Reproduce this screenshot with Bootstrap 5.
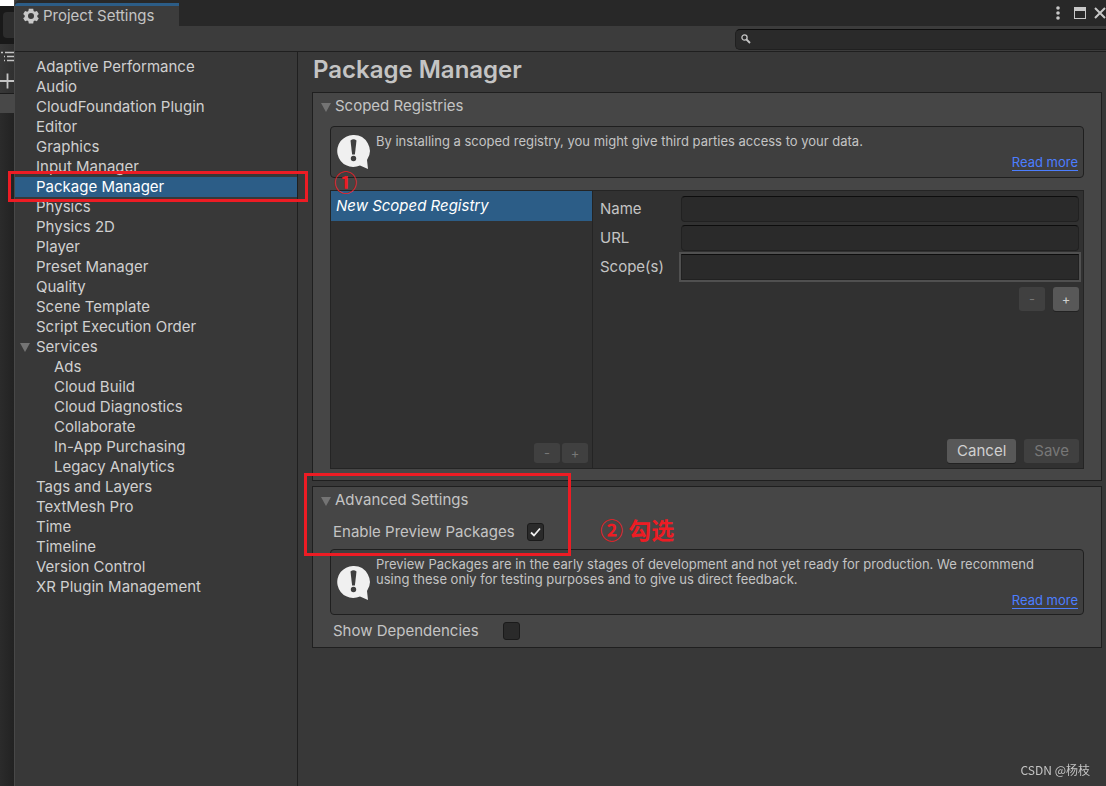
<!DOCTYPE html>
<html lang="en" data-bs-theme="dark">
<head>
<meta charset="utf-8">
<meta name="viewport" content="width=device-width, initial-scale=1">
<title>Project Settings</title>
<link rel="stylesheet" href="https://cdn.jsdelivr.net/npm/bootstrap@5.3.0/dist/css/bootstrap.min.css">
<style>
  :root { --line: #1f1f1f; --field: #2a2a2a; --pick: #2c5d87; --ink: #c4c4c4; --red: #ed1c24; }
  body { font: 15px/20px Inter, "Noto Sans CJK SC", sans-serif; color: var(--ink); background: #383838; }
  svg { display: block; flex: none; }
  a { color: inherit; text-decoration: none; }

  /* editor window showing behind the settings window */
  .behind { width: 14px; background: linear-gradient(90deg, #2b2b2b, #222); overflow: hidden; flex: none; }
  .behind-sky { height: 6px; background: #fff; }
  .behind-bar { height: 38px; background: #191919; padding: 6px 0 0 3px; }
  .behind-btn { height: 26px; width: 24px; background: #2d2d2d; border-radius: 4px; }
  .behind-tools { height: 50px; background: linear-gradient(90deg, #383838, #303030); border-bottom: 1px solid #1c1c1c; }
  .behind-row { height: 19px; background: #484848; }

  .pane { border-left: 1px solid #484848; min-width: 0; }
  .titlebar { height: 26px; background: #282828; border-top-left-radius: 5px; }
  .tab { width: 164px; margin-top: 3px; height: 23px; background: #3c3c3c; border-top: 3px solid var(--pick); border-top-left-radius: 3px; padding: 0 0 1px 8px; gap: 4px; }
  .toolbar { height: 26px; background: #3c3c3c; border-bottom: 1px solid var(--line); padding-top: 1px; }
  .finder { flex: 0 0 34%; height: 21px; background: var(--field); border: 1px solid #202020; border-top-color: #0d0d0d; border-right: 0; border-radius: 5px 0 0 5px; padding-left: 5px; gap: 4px; }
  .finder input { background: none; border: 0; outline: 0; color: var(--ink); min-width: 0; }
  .win-btn { border: 0; background: none; padding: 0; color: #c8c8c8; }

  .side { width: 283px; flex: none; border-right: 1px solid var(--line); padding-top: 5px; }
  .side a { display: block; height: 20px; padding-left: 21px; color: #d0d0d0; position: relative; }
  .side a.sub { padding-left: 39px; }
  .side a.active { background: var(--pick); color: #fff; }
  .fold { position: absolute; left: 5px; top: 6px; }

  .content { padding: 3px 4px 24px 14px; min-width: 0; }
  h1 { font-size: 24px; line-height: 30px; font-weight: 600; margin: 0 0 7px 1px; color: var(--ink); }
  .panel { background: #464646; border: 1px solid var(--line); padding: 0 17px; }
  .panel + .panel { margin-top: 5px; }
  .panel h2 { font-size: 15px; line-height: 25px; font-weight: 400; margin: 0 0 8px -9px; gap: 4px; color: var(--ink); }
  .note { background: #3f3f3f; border: 1px solid var(--line); border-radius: 4px; font-size: 13px; line-height: 15px; padding: 7px 5px 6px 6px; gap: 5px; min-height: 52px; }
  .note.tall { min-height: 66px; margin-top: 5px; padding-bottom: 5px; }
  .note p { margin: 0 8px 0 0; }
  .more { color: #4c7eff; border-bottom: 1px solid #4c7eff; align-self: flex-end; }
  .registry { border: 1px solid #242424; background: #313131; height: 279px; margin: 12px 0 11px; }
  .reg-list { width: 262px; flex: none; border-right: 1px solid #242424; }
  .reg-item { background: var(--pick); color: #fff; font-style: italic; height: 30px; line-height: 30px; padding: 0 0 0 5px; border: 0; text-align: left; }
  .reg-list .steps { gap: 2px; padding: 5px 4px; }
  .reg-form { padding: 5px 4px; padding-left: 7px; min-width: 0; }
  .field-row { gap: 3px; height: 26px; margin-bottom: 3px; }
  .field-row label { width: 78px; flex: none; }
  .field { height: 26px; min-width: 0; background: var(--field); color: var(--ink); border: 1px solid #212121; border-top-color: #0d0d0d; border-radius: 4px; outline: 0; }
  .field.ring { border-radius: 0; outline: 2px solid #505050; }
  .key { border: 0; border-radius: 3px; background: #585858; color: #d0d0d0; height: 24px; padding: 0; line-height: 24px; box-shadow: 0 1px 0 #222; }
  .key:disabled { background: #404040; color: #777; box-shadow: none; }
  .key.step { width: 26px; font-size: 13px; }
  .key.wide { padding: 0 10px; }
  .reg-list .key { height: 20px; line-height: 20px; }
  .opt { height: 24px; gap: 12px; padding-left: 3px; }
  .opt label { min-width: 158px; }
  .tick { appearance: none; width: 17px; height: 18px; margin: 0; background: var(--field); border: 1px solid #1a1a1a; border-radius: 3px; }
  .tick:checked { background: var(--field) url("data:image/svg+xml,%3Csvg xmlns='http://www.w3.org/2000/svg' viewBox='0 0 15 16'%3E%3Cpath d='M3 8.5l3 3 6-7' fill='none' stroke='%23eee' stroke-width='1.8'/%3E%3C/svg%3E") center/contain no-repeat; }

  .frame { position: absolute; border: 3px solid var(--red); pointer-events: none; z-index: 3; }
  .frame-nav { inset: -6px -11px -5px -7px; }
  .frame-opt { left: -9px; top: -14px; width: 267px; height: 83px; }
  .remark { position: absolute; color: var(--red); font: 700 23px/24px "Noto Sans CJK SC", sans-serif; z-index: 3; white-space: nowrap; }
  .remark-one { left: 3px; top: 42px; }
  .remark-two { left: 287px; top: 30px; }
  .credit { position: fixed; right: 16px; bottom: 6px; font: 12px/20px "Noto Sans CJK SC", sans-serif; color: #c4c4c4; }
</style>
</head>
<body>
<div class="d-flex min-vh-100">
  <div class="behind">
    <div class="behind-sky"></div>
    <div class="behind-bar"><div class="behind-btn"></div></div>
    <div class="behind-tools">
      <svg width="15" height="50" viewBox="0 0 15 50" fill="none" stroke="#c4c4c4"><path d="M5 8.500h10M7 12.500h8M7 16.500h8M1 8.500h2M4 12.500h1M4 16.500h1" stroke-width="1.300"/><path d="M0 37h15M7.500 29.500v15" stroke-width="1.800"/></svg>
    </div>
    <div class="behind-row"></div>
  </div>

  <div class="pane flex-grow-1 d-flex flex-column">
    <header>
      <div class="titlebar d-flex justify-content-between">
        <div class="tab d-flex align-items-center">
          <svg width="16" height="16" viewBox="0 0 16 16"><path fill="#c8c8c8" fill-rule="evenodd" d="M5.800.8h4.400l.4 2.200 1.200.7 2.100-.8 1.900 3.200L14.300 7.500v1.400l1.500 1.300-1.900 3-2.100-.7-1.200.7-.4 2.200H5.800L5.400 13.200l-1.200-.7-2.100.7-1.900-3L1.700 8.900V7.500L.2 6.100l1.900-3.200 2.100.8L5.400 3zM8 5a3 3 0 1 0 0 6a3 3 0 0 0 0-6z"/></svg>
          <span>Project Settings</span>
        </div>
        <div class="d-flex align-items-center gap-2">
          <button class="win-btn" aria-label="Menu"><svg width="8" height="14" viewBox="0 0 8 14" fill="currentColor"><circle cx="4" cy="2" r="1.800"/><circle cx="4" cy="7" r="1.800"/><circle cx="4" cy="12" r="1.800"/></svg></button>
          <button class="win-btn ms-1" aria-label="Maximize"><svg width="12" height="12" viewBox="0 0 12 12"><path fill="currentColor" fill-rule="evenodd" d="M0 0h12v12H0zM1 4v7h10V4z"/></svg></button>
          <button class="win-btn" aria-label="Close"><svg width="12" height="12" viewBox="0 0 12 12"><path d="M1 1l10 10M11 1L1 11" stroke="currentColor" stroke-width="2"/></svg></button>
        </div>
      </div>
      <div class="toolbar d-flex justify-content-end align-items-center">
        <div class="finder d-flex align-items-center">
          <svg width="10" height="10" viewBox="0 0 10 10" fill="none" stroke="#c4c4c4"><circle cx="3.500" cy="3.500" r="2.600" stroke-width="1.300"/><path d="M5.500 5.500L9 9" stroke-width="1.800"/></svg>
          <input type="search" class="flex-grow-1" aria-label="Search settings">
        </div>
      </div>
    </header>

    <div class="d-flex flex-grow-1">
      <nav class="side" aria-label="Settings">
        <a href="#">Adaptive Performance</a>
        <a href="#">Audio</a>
        <a href="#">CloudFoundation Plugin</a>
        <a href="#">Editor</a>
        <a href="#">Graphics</a>
        <a href="#">Input Manager</a>
        <a href="#" class="active">Package Manager<span class="frame frame-nav"></span></a>
        <a href="#">Physics</a>
        <a href="#">Physics 2D</a>
        <a href="#">Player</a>
        <a href="#">Preset Manager</a>
        <a href="#">Quality</a>
        <a href="#">Scene Template</a>
        <a href="#">Script Execution Order</a>
        <a href="#"><svg class="fold" width="10" height="9" viewBox="0 0 10 9"><path d="M0 0h10L5 9z" fill="#747474"/></svg>Services</a>
        <a href="#" class="sub">Ads</a>
        <a href="#" class="sub">Cloud Build</a>
        <a href="#" class="sub">Cloud Diagnostics</a>
        <a href="#" class="sub">Collaborate</a>
        <a href="#" class="sub">In-App Purchasing</a>
        <a href="#" class="sub">Legacy Analytics</a>
        <a href="#">Tags and Layers</a>
        <a href="#">TextMesh Pro</a>
        <a href="#">Time</a>
        <a href="#">Timeline</a>
        <a href="#">Version Control</a>
        <a href="#">XR Plugin Management</a>
      </nav>

      <main class="content flex-grow-1">
        <h1>Package Manager</h1>

        <section class="panel">
          <h2 class="d-flex align-items-center"><svg class="mt-1" width="10" height="9" viewBox="0 0 10 9"><path d="M0 0h10L5 9z" fill="#747474"/></svg>Scoped Registries</h2>
          <div class="note d-flex position-relative">
            <svg width="34" height="36" viewBox="0 0 34 36"><path d="M16 1a16 16 0 1 0 7 30.500L31 35l-1-9A16 16 0 0 0 16 1z" fill="#f0f0f0"/><path d="M13.500 6.500q3-2.500 6 0L17.900 20.500h-2.800z" fill="#3f3f3f"/><circle cx="16.500" cy="24.500" r="2.700" fill="#3f3f3f"/></svg>
            <div class="flex-grow-1 d-flex flex-column justify-content-between">
              <p>By installing a scoped registry, you might give third parties access to your data.</p>
              <a href="#" class="more">Read more</a>
            </div>
            <span class="remark remark-one">①</span>
          </div>

          <div class="registry d-flex">
            <div class="reg-list d-flex flex-column justify-content-between">
              <button class="reg-item">New Scoped Registry</button>
              <div class="steps d-flex justify-content-end">
                <button class="key step" disabled>-</button>
                <button class="key step" disabled>+</button>
              </div>
            </div>
            <form class="reg-form flex-grow-1 d-flex flex-column">
              <div class="field-row d-flex align-items-center"><label for="reg-name">Name</label><input id="reg-name" class="field flex-grow-1" type="text"></div>
              <div class="field-row d-flex align-items-center"><label for="reg-url">URL</label><input id="reg-url" class="field flex-grow-1" type="text"></div>
              <div class="field-row d-flex align-items-center"><label for="reg-scope">Scope(s)</label><input id="reg-scope" class="field ring flex-grow-1" type="text"></div>
              <div class="d-flex justify-content-end gap-2 pt-1">
                <button type="button" class="key step" disabled>-</button>
                <button type="button" class="key step">+</button>
              </div>
              <div class="d-flex justify-content-end gap-2 mt-auto">
                <button type="button" class="key wide">Cancel</button>
                <button type="button" class="key wide" disabled>Save</button>
              </div>
            </form>
          </div>
        </section>

        <section class="panel position-relative">
          <h2 class="d-flex align-items-center"><svg class="mt-1" width="10" height="9" viewBox="0 0 10 9"><path d="M0 0h10L5 9z" fill="#747474"/></svg>Advanced Settings</h2>
          <div class="opt d-flex align-items-center">
            <label for="preview">Enable Preview Packages</label>
            <input id="preview" class="tick" type="checkbox" checked>
          </div>
          <div class="note tall d-flex">
            <svg class="align-self-center" width="34" height="36" viewBox="0 0 34 36"><path d="M16 1a16 16 0 1 0 7 30.500L31 35l-1-9A16 16 0 0 0 16 1z" fill="#f0f0f0"/><path d="M13.500 6.500q3-2.500 6 0L17.900 20.500h-2.800z" fill="#3f3f3f"/><circle cx="16.500" cy="24.500" r="2.700" fill="#3f3f3f"/></svg>
            <div class="flex-grow-1 d-flex flex-column justify-content-between">
              <p>Preview Packages are in the early stages of development and not yet ready for production. We recommend using these only for testing purposes and to give us direct feedback.</p>
              <a href="#" class="more">Read more</a>
            </div>
          </div>
          <div class="opt d-flex align-items-center my-1">
            <label for="deps">Show Dependencies</label>
            <input id="deps" class="tick" type="checkbox">
          </div>
          <span class="frame frame-opt"></span>
          <span class="remark remark-two">② 勾选</span>
        </section>
      </main>
    </div>
  </div>
</div>
<div class="credit">CSDN @杨枝</div>
<script src="https://cdn.jsdelivr.net/npm/bootstrap@5.3.0/dist/js/bootstrap.bundle.min.js"></script>
</body>
</html>
